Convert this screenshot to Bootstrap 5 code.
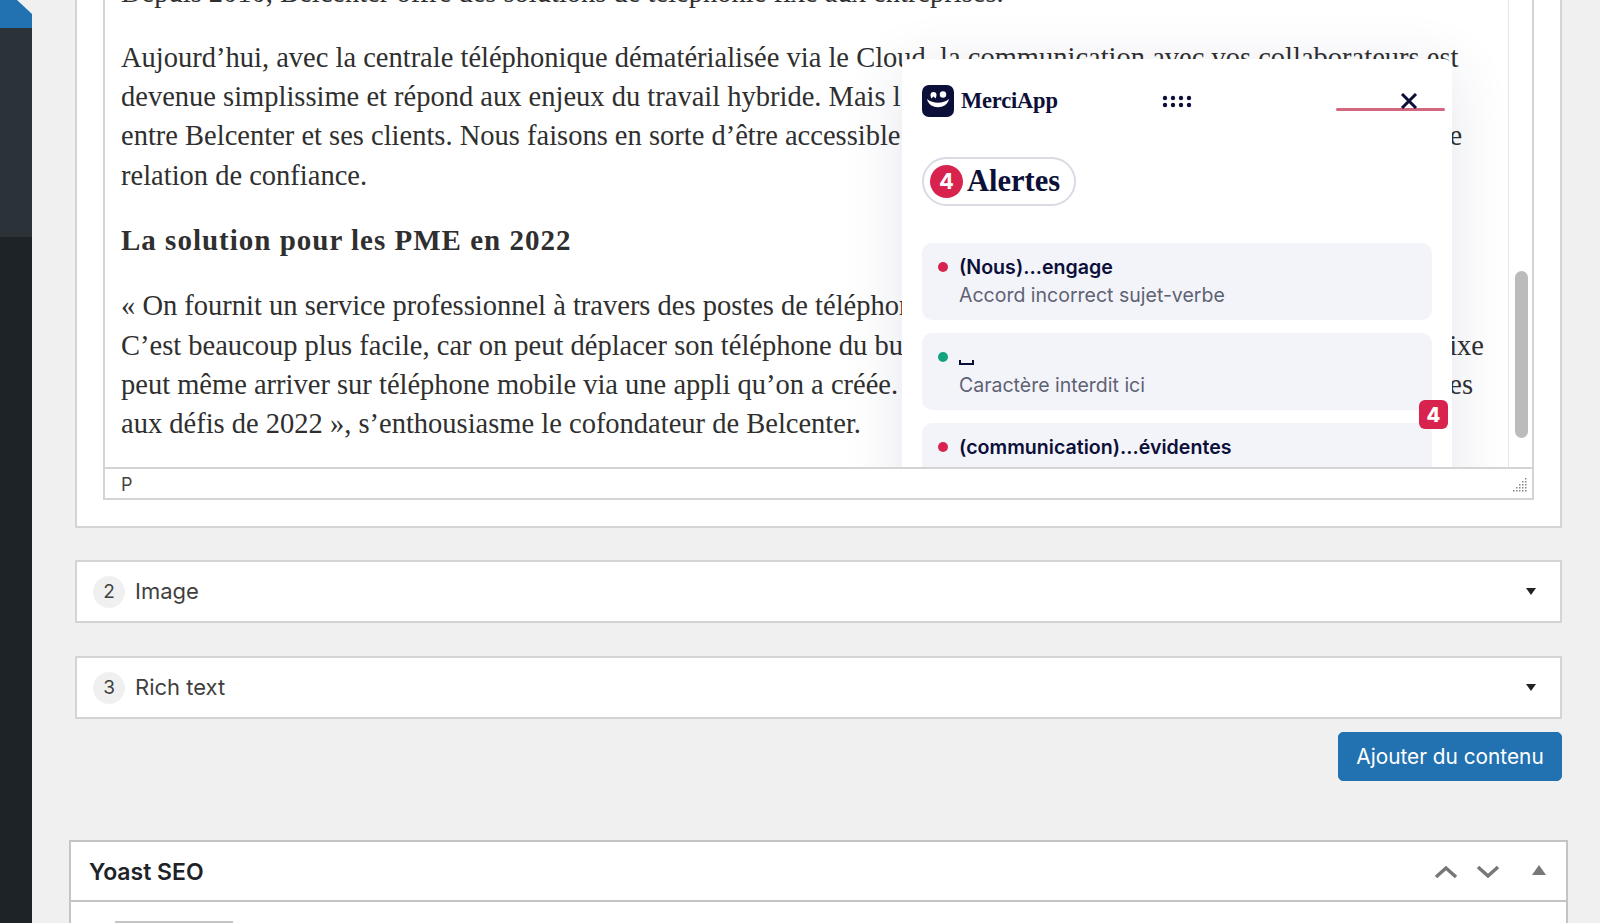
<!DOCTYPE html>
<html lang="fr">
<head>
  <meta charset="UTF-8">
  <meta name="viewport" content="width=device-width, initial-scale=1.0">
  <title>Modifier la page</title>
  <link href="https://cdn.jsdelivr.net/npm/bootstrap@5.3.0/dist/css/bootstrap.min.css" rel="stylesheet">
  <style>
    html, body { height: 923px; overflow: hidden; }
    body { background: #f0f0f1; font-family: Inter, "Liberation Sans", sans-serif; color: #3c434a; }

    /* admin menu */
    .admin-side { width: 32px; height: 923px; background: #1d2327; flex: none; }
    .admin-corner { background: #f0f0f1; }
    .admin-current { height: 28px; background: #2271b1; clip-path: polygon(0 0, 17px 0, 32px 14px, 32px 100%, 0 100%); }
    .admin-sub { height: 209px; background: #2c3338; }

    .work-area { width: 1568px; height: 1100px; padding: 0 38px 0 43px; margin-top: -51px; flex: none; }

    .block-box { background: #fff; border: 2px solid #d4d4d4; }
    .edit-box { padding: 18px 26px 26px 26px; margin-bottom: 32px; }

    /* tinymce like editor */
    .mce-box { border: 2px solid #d4d4d4; }
    .mce-body { height: 496px; overflow: hidden; position: relative; }
    .doc-col { padding: 1.5px 0 0 16px; width: 1405px; font-family: "Liberation Serif", serif; font-size: 28.5px; line-height: 39.3px; color: #2f2f2f; white-space: nowrap; }
    .doc-para { margin: 0 0 26px; }
    .doc-head { margin: 0 0 26px; font-weight: 700; font-size: 29px; letter-spacing: 1px; }
    .doc-tail-a { margin-right: 46px; }
    .doc-tail-b { margin-right: 24px; }
    .doc-tail-c { margin-right: 35px; }
    .scroll-gutter { width: 24px; border-left: 1px solid #e6e6e6; position: relative; }
    .scroll-thumb { position: absolute; left: 6px; top: 300px; width: 13px; height: 167px; background: #bbb; border-radius: 7px; }
    .mce-status { height: 31px; border-top: 2px solid #d4d4d4; padding: 2px 4px 0 16px; font-size: 18px; line-height: 28px; color: #444; }

    /* collapsed rows */
    .row-box { height: 63px; padding: 0 24px 0 16px; margin-bottom: 33px; font-size: 22px; color: #3f3f3f; }
    .row-num { width: 32px; height: 32px; border-radius: 50%; background: #f0f0f0; font-size: 19px; margin-right: 10px; padding-top: 2px; }
    .row-arrow { width: 0; height: 0; border-left: 5px solid transparent; border-right: 5px solid transparent; border-top: 7px solid #222; }
    .add-btn { width: 224px; height: 49px; margin-top: -20px; padding: 1px 0 0; font-size: 20.8px; background: #2271b1; border-color: #2271b1; border-radius: 5px; }

    .yoast-box { margin: 59px -6px 0 -6px; background: #fff; border: 2px solid #c4c4c4; height: 200px; }
    .yoast-head { height: 60px; border-bottom: 2px solid #c4c4c4; padding: 2px 20px 0 18px; }
    .yoast-title { font-size: 23px; font-weight: 600; color: #1d2327; }
    .yoast-up { margin-left: auto; }
    .yoast-down { margin-left: 18px; }
    .yoast-fold { margin-left: 32px; margin-bottom: 4px; }
    .yoast-tab { width: 118px; height: 4px; margin: 19px 0 0 44px; border-top: 2px solid #c4c4c4; }

    /* merciapp panel */
    .merci-panel { position: absolute; left: 797px; top: 88px; width: 550px; height: 600px; background: #fff; border-radius: 8px 8px 0 0; padding: 0 20px; box-shadow: 0 10px 60px rgba(40, 50, 110, .12); color: #0c0f38; }
    .merci-top { height: 32px; margin-top: 26px; position: relative; }
    .merci-logo { flex: none; }
    .merci-name { font-family: "Liberation Serif", serif; font-weight: 700; font-size: 22.5px; margin-left: 7px; letter-spacing: -.2px; }
    .merci-grip { position: absolute; left: 240px; top: 10px; }
    .merci-close { position: absolute; left: 478px; top: 8px; }
    .merci-line { position: absolute; left: 414px; top: 23px; width: 109px; height: 3px; background: #d2677f; border-radius: 2px; }
    .merci-pill { width: 154px; height: 49px; margin-top: 40px; border: 2px solid #d9dbe5; border-radius: 25px; padding-left: 6px; }
    .merci-count { width: 33px; height: 33px; border-radius: 50%; background: #d9234f; color: #fff; font-weight: 700; font-size: 22px; flex: none; }
    .merci-pill-text { font-family: "Liberation Serif", serif; font-weight: 700; font-size: 30.5px; margin-left: 4px; }
    .alert-list { margin-top: 37px; gap: 13px; }
    .alert-item { height: 77px; background: #f3f4fa; border-radius: 10px; padding: 14px 16px 0 37px; position: relative; }
    .alert-dot { position: absolute; left: 16px; top: 19px; width: 10px; height: 10px; border-radius: 50%; background: #d9234f; }
    .alert-dot-ok { background: #14a37f; }
    .alert-title { font-size: 19.6px; font-weight: 600; line-height: 20px; }
    .alert-space { display: block; }
    .alert-sub { font-size: 19.5px; line-height: 20px; margin-top: 8px; color: #5e6273; }
    .merci-flag { position: absolute; left: 517px; top: 341px; width: 29px; height: 29px; border-radius: 6px; background: #d9234f; color: #fff; font-weight: 800; font-size: 20px; }
  </style>
</head>
<body>
  <div class="d-flex">
    <div class="admin-side">
      <div class="admin-corner"><div class="admin-current"></div></div>
      <div class="admin-sub"></div>
    </div>

    <div class="work-area">
      <div class="block-box edit-box">
        <div class="mce-box">
          <div class="mce-body d-flex">
            <div class="doc-col">
              <p class="doc-para">Depuis 2010, Belcenter offre des solutions de téléphonie fixe aux entreprises.</p>
              <div class="doc-para">
                <div>Aujourd’hui, avec la centrale téléphonique dématérialisée via le Cloud, la communication avec vos collaborateurs est</div>
                <div>devenue simplissime et répond aux enjeux du travail hybride. Mais l</div>
                <div class="d-flex justify-content-between"><span>entre Belcenter et ses clients. Nous faisons en sorte d’être accessible</span><span class="doc-tail-a">e</span></div>
                <div>relation de confiance.</div>
              </div>
              <p class="doc-head">La solution pour les PME en 2022</p>
              <div class="doc-para">
                <div>« On fournit un service professionnel à travers des postes de téléphone</div>
                <div class="d-flex justify-content-between"><span>C’est beaucoup plus facile, car on peut déplacer son téléphone du bu</span><span class="doc-tail-b">ixe</span></div>
                <div class="d-flex justify-content-between"><span>peut même arriver sur téléphone mobile via une appli qu’on a créée.</span><span class="doc-tail-c">es</span></div>
                <div>aux défis de 2022 », s’enthousiasme le cofondateur de Belcenter.</div>
              </div>
            </div>
            <div class="scroll-gutter ms-auto"><div class="scroll-thumb"></div></div>

            <div class="merci-panel">
              <div class="merci-top d-flex align-items-center">
                <svg class="merci-logo" width="32" height="32" viewBox="0 0 32 32">
                  <rect width="32" height="32" rx="7" fill="#0c0f38"/>
                  <path d="M5 14c2 11 20 11 22 0-6 5-16 5-22 0z" fill="#fff"/>
                  <path d="M8.500 10a3 3 0 0 1 6 0c0 1.200-.5 2.400-1 3.500-1-1-1.500-2-2-2s-1 1-2 2c-.5-1-1-2.300-1-3.500z" fill="#fff"/>
                  <circle cx="21" cy="9.500" r="3.200" fill="#fff"/>
                </svg>
                <span class="merci-name">MerciApp</span>
                <svg class="merci-grip" width="30" height="13" viewBox="0 0 30 13" fill="#0c0f38">
                  <circle cx="3" cy="3" r="2.200"/><circle cx="11" cy="3" r="2.200"/><circle cx="19" cy="3" r="2.200"/><circle cx="27" cy="3" r="2.200"/>
                  <circle cx="3" cy="10" r="2.200"/><circle cx="11" cy="10" r="2.200"/><circle cx="19" cy="10" r="2.200"/><circle cx="27" cy="10" r="2.200"/>
                </svg>
                <div class="merci-line"></div>
                <svg class="merci-close" width="18" height="16" viewBox="0 0 18 16"><path d="M2 1l14 14M16 1L2 15" stroke="#0c0f38" stroke-width="3" fill="none"/></svg>
              </div>

              <div class="merci-pill d-flex align-items-center">
                <span class="merci-count d-flex align-items-center justify-content-center">4</span>
                <span class="merci-pill-text">Alertes</span>
              </div>

              <div class="alert-list d-flex flex-column">
                <div class="alert-item">
                  <span class="alert-dot"></span>
                  <div class="alert-title">(Nous)…engage</div>
                  <div class="alert-sub">Accord incorrect sujet-verbe</div>
                </div>
                <div class="alert-item">
                  <span class="alert-dot alert-dot-ok"></span>
                  <div class="alert-title"><svg class="alert-space" width="15" height="20" viewBox="0 0 15 20"><path d="M1 13v4h13v-4" stroke="#0c0f38" stroke-width="2" fill="none"/></svg></div>
                  <div class="alert-sub">Caractère interdit ici</div>
                </div>
                <div class="alert-item">
                  <span class="alert-dot"></span>
                  <div class="alert-title">(communication)…évidentes</div>
                </div>
              </div>

              <div class="merci-flag d-flex align-items-center justify-content-center">4</div>
            </div>
          </div>
          <div class="mce-status d-flex justify-content-between align-items-center">
            <span>P</span>
            <svg width="16" height="16" viewBox="0 0 16 16" fill="#888">
              <rect x="13" y="1" width="1.500" height="1.500"/><rect x="10" y="4" width="1.500" height="1.500"/><rect x="13" y="4" width="1.500" height="1.500"/>
              <rect x="7" y="7" width="1.500" height="1.500"/><rect x="10" y="7" width="1.500" height="1.500"/><rect x="13" y="7" width="1.500" height="1.500"/>
              <rect x="4" y="10" width="1.500" height="1.500"/><rect x="7" y="10" width="1.500" height="1.500"/><rect x="10" y="10" width="1.500" height="1.500"/><rect x="13" y="10" width="1.500" height="1.500"/>
              <rect x="1" y="13" width="1.500" height="1.500"/><rect x="4" y="13" width="1.500" height="1.500"/><rect x="7" y="13" width="1.500" height="1.500"/><rect x="10" y="13" width="1.500" height="1.500"/><rect x="13" y="13" width="1.500" height="1.500"/>
            </svg>
          </div>
        </div>
      </div>

      <div class="block-box row-box d-flex align-items-center">
        <span class="row-num d-flex align-items-center justify-content-center">2</span>
        <span>Image</span>
        <span class="row-arrow ms-auto"></span>
      </div>
      <div class="block-box row-box d-flex align-items-center">
        <span class="row-num d-flex align-items-center justify-content-center">3</span>
        <span>Rich text</span>
        <span class="row-arrow ms-auto"></span>
      </div>

      <div class="d-flex justify-content-end">
        <button type="button" class="btn btn-primary add-btn">Ajouter du contenu</button>
      </div>

      <div class="yoast-box">
        <div class="yoast-head d-flex align-items-center">
          <span class="yoast-title">Yoast SEO</span>
          <svg class="yoast-up" width="24" height="14" viewBox="0 0 24 14"><path d="M2 12l10-9 10 9" stroke="#777" stroke-width="3.500" fill="none"/></svg>
          <svg class="yoast-down" width="24" height="14" viewBox="0 0 24 14"><path d="M2 2l10 9 10-9" stroke="#777" stroke-width="3.500" fill="none"/></svg>
          <svg class="yoast-fold" width="14" height="10" viewBox="0 0 14 10"><path d="M7 0l7 10H0z" fill="#777"/></svg>
        </div>
        <div class="yoast-tab"></div>
      </div>
    </div>
  </div>
  <script src="https://cdn.jsdelivr.net/npm/bootstrap@5.3.0/dist/js/bootstrap.bundle.min.js"></script>
</body>
</html>
